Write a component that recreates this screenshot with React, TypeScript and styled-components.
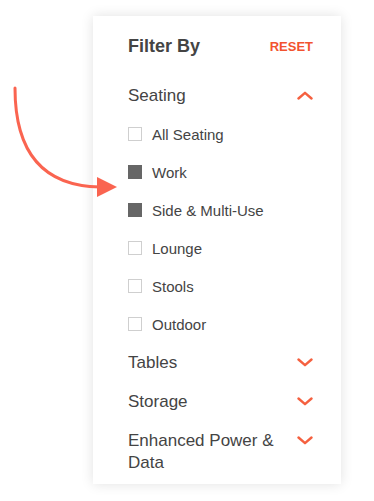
import styled, { createGlobalStyle } from "styled-components"

const GlobalStyle = createGlobalStyle`
  html, body {
    margin: 0;
    padding: 0;
    background: #ffffff;
    font-family: "Liberation Sans", Arial, sans-serif;
  }
`

const Page = styled.div`
  position: relative;
  width: 374px;
  height: 501px;
  overflow: hidden;
  background: #ffffff;
`

const Arrow = styled.svg`
  position: absolute;
  left: 0;
  top: 0;
`

const Card = styled.div`
  margin: 16px 0 0 93px;
  width: 248px;
  box-sizing: border-box;
  padding: 14px 28px 10px 35px;
  background: #ffffff;
  box-shadow: 0 0 12px rgba(0, 0, 0, 0.12);
`

const Header = styled.div`
  display: flex;
  align-items: center;
  justify-content: space-between;
  height: 32px;
  margin-bottom: 15px;
`

const Title = styled.h3`
  margin: 0;
  font-size: 18px;
  font-weight: 700;
  color: #444444;
`

const Reset = styled.button`
  border: 0;
  background: none;
  padding: 0;
  font-family: inherit;
  font-size: 13px;
  font-weight: 700;
  color: #f2532f;
  cursor: pointer;
`

const Section = styled.div<{ $height: number }>`
  display: flex;
  align-items: flex-start;
  justify-content: space-between;
  min-height: ${(p) => p.$height}px;
  box-sizing: border-box;
  padding-top: ${(p) => (p.$height - 22) / 2}px;
`

const SectionLabel = styled.span`
  font-size: 17px;
  line-height: 22px;
  color: #444444;
  max-width: 160px;
`

const Chevron = styled.svg`
  flex: none;
  margin-top: 6px;
`

const Items = styled.div`
  display: flex;
  flex-direction: column;
`

const Item = styled.label`
  display: flex;
  align-items: center;
  gap: 10px;
  height: 38px;
`

const Box = styled.span<{ $checked: boolean }>`
  width: 14px;
  height: 14px;
  box-sizing: border-box;
  border: 1px solid ${(p) => (p.$checked ? "#666666" : "#cfcfcf")};
  background: ${(p) => (p.$checked ? "#666666" : "#ffffff")};
`

const ItemText = styled.span`
  font-size: 15px;
  color: #444444;
`

const seating = [
  { label: "All Seating", checked: false },
  { label: "Work", checked: true },
  { label: "Side & Multi-Use", checked: true },
  { label: "Lounge", checked: false },
  { label: "Stools", checked: false },
  { label: "Outdoor", checked: false },
]

function ChevronIcon({ up }: { up?: boolean }) {
  return (
    <Chevron width="16" height="9" viewBox="0 0 16 9">
      <path
        d={up ? "M1.5 7.5 L8 1.8 L14.5 7.5" : "M1.5 1.5 L8 7.2 L14.5 1.5"}
        fill="none"
        stroke="#f5603f"
        strokeWidth="2.4"
        strokeLinecap="round"
        strokeLinejoin="round"
      />
    </Chevron>
  )
}

export default function App() {
  return (
    <>
      <GlobalStyle />
      <Page>
        <Card>
          <Header>
            <Title>Filter By</Title>
            <Reset>RESET</Reset>
          </Header>

          <Section $height={38}>
            <SectionLabel>Seating</SectionLabel>
            <ChevronIcon up />
          </Section>
          <Items>
            {seating.map((s) => (
              <Item key={s.label}>
                <Box $checked={s.checked} />
                <ItemText>{s.label}</ItemText>
              </Item>
            ))}
          </Items>

          <Section $height={39}>
            <SectionLabel>Tables</SectionLabel>
            <ChevronIcon />
          </Section>
          <Section $height={39}>
            <SectionLabel>Storage</SectionLabel>
            <ChevronIcon />
          </Section>
          <Section $height={39}>
            <SectionLabel>Enhanced Power &amp; Data</SectionLabel>
            <ChevronIcon />
          </Section>
        </Card>

        <Arrow width="130" height="210" viewBox="0 0 130 210">
          <path
            d="M15 88 C 15 152, 42 186, 100 187"
            fill="none"
            stroke="#fa6450"
            strokeWidth="3"
            strokeLinecap="round"
          />
          <polygon points="117,187 97,177 97,197" fill="#fa6450" />
        </Arrow>
      </Page>
    </>
  )
}
